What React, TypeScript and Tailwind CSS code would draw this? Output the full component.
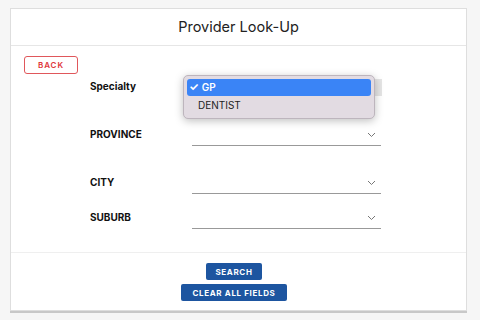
import React from 'react';

function Chevron() {
  return (
    <svg width="9" height="6" viewBox="0 0 9 6" className="text-[#777]">
      <path d="M1 1l3.5 3.5L8 1" fill="none" stroke="currentColor" strokeWidth="1" />
    </svg>
  );
}

function SelectRow({ label }: { label: string }) {
  return (
    <div className="flex items-end">
      <div className="w-[102px] pb-[4px] text-[10px] font-bold text-[#111]">{label}</div>
      <div className="flex h-[22px] w-[189px] items-center justify-end border-b border-[#999] pr-[5px]">
        <Chevron />
      </div>
    </div>
  );
}

export default function App() {
  return (
    <div className="h-[320px] w-[480px] bg-[#f6f6f6] pt-[8px] pl-[10px]" style={{ fontFamily: 'Inter, "DejaVu Sans", sans-serif' }}>
      <div className="flex h-[303px] w-[457px] flex-col border border-[#dedede] bg-white shadow-[0_2px_0_#c8c8c8]">
        <header className="flex h-[37px] items-center justify-center border-b border-[#e6e6e6] text-[14.5px] text-[#222]">
          Provider Look-Up
        </header>

        <section className="flex-1 pt-[10px] pl-[13px]">
          <button className="flex h-[18px] w-[54px] items-center justify-center rounded-[3px] border border-[#e0575b] text-[8px] font-semibold tracking-[0.12em] text-[#e0353a]">
            BACK
          </button>

          <div className="ml-[66px] flex flex-col">
            <div className="relative flex h-[30px] items-start">
              <div className="w-[102px] pt-[5px] text-[10px] font-bold text-[#111]">Specialty</div>
              <div className="mt-[5px] h-[17px] w-[190px] bg-[#e5e5e5]" />
              <div className="absolute top-[1px] left-[93px] w-[192px] rounded-[5px] border border-[#bdb5bd] bg-[#e2dbe2] px-[3px] pt-[3px] pb-[3px] shadow-[0_2px_8px_rgba(0,0,0,0.25)]">
                <div className="flex h-[17px] items-center rounded-[3px] bg-[#3a84f6] pl-[2px] text-[10px] font-semibold text-white">
                  <span className="mr-[3px] text-[11px] font-bold">✓</span>GP
                </div>
                <div className="flex h-[19px] items-center pl-[11px] text-[10px] text-[#222]">DENTIST</div>
              </div>
            </div>

            <div className="mt-[20px]">
              <SelectRow label="PROVINCE" />
            </div>
            <div className="mt-[26px]">
              <SelectRow label="CITY" />
            </div>
            <div className="mt-[13px]">
              <SelectRow label="SUBURB" />
            </div>
          </div>
        </section>

        <footer className="flex h-[58px] flex-col items-center gap-[4px] border-t border-[#efefef] pt-[10px] pr-[9px]">
          <button className="flex h-[17px] w-[56px] items-center justify-center rounded-[2px] bg-[#1d55a0] text-[8px] font-bold tracking-[0.08em] text-white">
            SEARCH
          </button>
          <button className="flex h-[17px] w-[106px] items-center justify-center rounded-[2px] bg-[#1d55a0] text-[8px] font-bold tracking-[0.08em] text-white">
            CLEAR ALL FIELDS
          </button>
        </footer>
      </div>
    </div>
  );
}
